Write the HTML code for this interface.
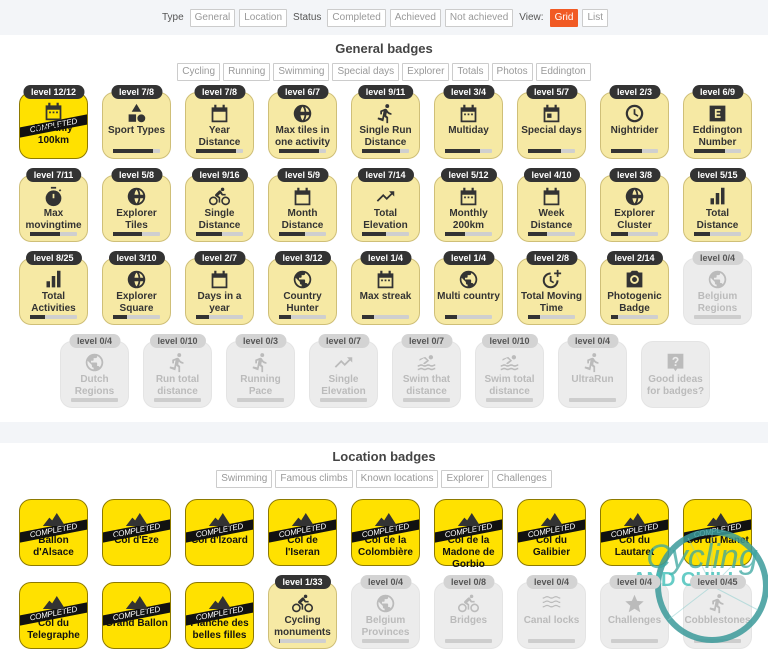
<!DOCTYPE html>
<html><head><meta charset="utf-8">
<style>
*{box-sizing:border-box}
body{margin:0;width:768px;height:655px;overflow:hidden;background:#fff;font-family:"Liberation Sans",sans-serif;position:relative}
.bar{position:absolute;left:0;width:768px;background:#f3f5f8}
.fb{position:absolute;top:0;left:0;width:768px;height:35px;display:flex;justify-content:center;align-items:center;gap:4px;font-size:10px;color:#555}
.fb span.l{margin:0 2px}
.btn{border:1px solid #ccc;background:#fff;color:#999;padding:2px 4px;font-size:10px;line-height:12px;border-radius:1px}
.btn.on{background:#f15a24;border-color:#f15a24;color:#fff}
h2{position:absolute;left:0;width:768px;text-align:center;margin:0;font-size:13px;font-weight:bold;color:#444}
.chips{position:absolute;left:0;width:768px;display:flex;justify-content:center;gap:3px}
.b{position:absolute;width:69px;height:67px;border-radius:12px;border:1px solid #cfbf78;background:#f6e9a4;text-align:center;font-weight:bold;font-size:10px;color:#333;line-height:12px}
.lv{position:absolute;top:-8px;left:50%;transform:translateX(-50%);background:#333;color:#fff;font-size:9px;padding:1px 8px;border-radius:8px;white-space:nowrap;line-height:12px;font-weight:bold;z-index:3}
.ic{display:block;margin:10px auto 1px;width:21px;height:21px;fill:#333;stroke:none;position:relative}
.pb{position:absolute;left:10px;right:10px;bottom:5px;height:4px;background:#cfcfcf;border-radius:1px}
.pb i{display:block;height:100%;background:#333}
.g{background:#ececec;border-color:#e4e4e4;color:#bbb}
.g .lv{background:#d3d3d3;color:#555}
.g .ic{fill:#bbb}
.g .pb{background:#cdcdcd}
.c{background:#ffe100;border-color:#8e7a00;color:#111}
.clip{position:absolute;left:0;top:0;right:0;bottom:0;overflow:hidden;border-radius:11px}
.band{position:absolute;left:-6px;right:-6px;top:28px;height:10px;background:#111;transform:rotate(-11deg);color:#fff;font-size:8px;font-style:italic;font-weight:normal;line-height:10px;letter-spacing:-.2px}
.c .t{position:relative}
.c .ic{margin-top:8px}
.lc .ic{margin-top:13px;width:24px;height:13px;margin-bottom:0}
.lc .band{top:26px}
.lc .t{margin-top:9px}
</style></head><body>
<svg width="0" height="0" style="position:absolute">
<defs>
<symbol id="cal" viewBox="0 0 24 24"><path d="M3 5h18v17H3zM5 10v10h14V10z" fill-rule="evenodd"/><rect x="6" y="2" width="2.5" height="5"/><rect x="15.5" y="2" width="2.5" height="5"/></symbol>
<symbol id="cald" viewBox="0 0 24 24"><path d="M3 5h18v17H3zM5 10v10h14V10z" fill-rule="evenodd"/><rect x="6" y="2" width="2.5" height="5"/><rect x="15.5" y="2" width="2.5" height="5"/><rect x="7" y="12" width="2" height="2"/><rect x="11" y="12" width="2" height="2"/><rect x="15" y="12" width="2" height="2"/></symbol>
<symbol id="cals" viewBox="0 0 24 24"><path d="M3 5h18v17H3zM5 10v10h14V10z" fill-rule="evenodd"/><rect x="6" y="2" width="2.5" height="5"/><rect x="15.5" y="2" width="2.5" height="5"/><rect x="7" y="12" width="5" height="5"/></symbol>
<symbol id="shp" viewBox="0 0 24 24"><path d="M12 1l5.5 9h-11z"/><rect x="3" y="13" width="8.5" height="8.5"/><circle cx="17.5" cy="17.5" r="4.5"/></symbol>
<symbol id="glb" viewBox="0 0 24 24"><path d="M12 2a10 10 0 1 0 0.01 0zM12 4.2c1.2 1.3 2 3.4 2.3 5.8H9.7C10 7.6 10.8 5.5 12 4.2zM4.3 10h3.4c.1-2.2.7-4 1.5-5.4A8 8 0 0 0 4.3 10zm0 4a8 8 0 0 0 4.9 5.4C8.4 18 7.8 16.2 7.7 14zm5.4 0h4.6c-.3 2.4-1.1 4.5-2.3 5.8-1.2-1.3-2-3.4-2.3-5.8zm6.6 0h3.4a8 8 0 0 1-4.9 5.4c.8-1.4 1.4-3.2 1.5-5.4zm3.4-4h-3.4c-.1-2.2-.7-4-1.5-5.4a8 8 0 0 1 4.9 5.4z"/></symbol>
<symbol id="run" viewBox="0 0 24 24"><circle cx="14" cy="3.5" r="2.2"/><path d="M9.5 21l1.2-5.5 2.3 2.1V23h2v-6.8l-2.2-2 .7-3.2c1.3 1.5 3.1 2.5 5.3 2.5v-2c-1.8 0-3.3-1-4.1-2.3l-1-1.6c-.4-.6-1-1-1.7-1-.3 0-.5.1-.8.1L6 8.8V13h2V10.1l1.8-.7-1.6 8.1-4.8-1-.4 2z"/></symbol>
<symbol id="clk" viewBox="0 0 24 24"><path d="M12 2a10 10 0 1 0 .01 0zm0 2.5a7.5 7.5 0 1 1-.01 0zM11 7h2v5l3.5 2.1-1 1.6L11 13z"/></symbol>
<symbol id="E" viewBox="0 0 24 24"><path d="M3 3h18v18H3zM9 7v10h6.5v-2H11v-2h4v-2h-4V9h4.5V7z" fill-rule="evenodd"/></symbol>
<symbol id="sw" viewBox="0 0 24 24"><rect x="9" y="1" width="6" height="2"/><path d="M12 5a9 9 0 1 0 .01 0zm-1 4h2v5h-2z"/><path d="M18 5l1.5-1.5 1.4 1.4L19.4 6.4z"/></symbol>
<symbol id="bike" viewBox="0 0 24 24"><circle cx="15.5" cy="3.8" r="2"/><path d="M5 12a5 5 0 1 0 .01 0zm0 1.8a3.2 3.2 0 1 1-.01 0zM19 12a5 5 0 1 0 .01 0zm0 1.8a3.2 3.2 0 1 1-.01 0zM14.8 10.8H19V9h-3.2l-1.9-3.2c-.3-.5-.9-.8-1.5-.8-.5 0-.9.2-1.2.5L7.4 9.3c-.3.3-.5.7-.5 1.2 0 .6.3 1.1.8 1.4L11 14v5h1.8v-6.2l-2.3-1.7 2.4-2.4z"/></symbol>
<symbol id="trd" viewBox="0 0 24 24"><path d="M16 6l2.3 2.3-4.9 4.9-4-4L2 16.6 3.4 18l6-6 4 4 6.3-6.3L22 12V6z"/></symbol>
<symbol id="bar" viewBox="0 0 24 24"><rect x="4" y="14" width="4" height="7"/><rect x="10" y="8" width="4" height="13"/><rect x="16" y="2" width="4" height="19"/></symbol>
<symbol id="erth" viewBox="0 0 24 24"><path d="M12 2a10 10 0 1 0 .01 0zM11 19.9A8 8 0 0 1 4.2 10L9 14.8v1a2 2 0 0 0 2 2zm6.9-2.5A2 2 0 0 0 16 16h-1v-3a1 1 0 0 0-1-1H8v-2h2a1 1 0 0 0 1-1V7h2a2 2 0 0 0 2-2v-.4a8 8 0 0 1 2.9 12.8z"/></symbol>
<symbol id="cam" viewBox="0 0 24 24"><path d="M9 2L7.2 4H3v17h18V4h-4.2L15 2zm3 5a5 5 0 1 1-.01 0zm0 2.2a2.8 2.8 0 1 0 .01 0z" fill-rule="evenodd"/></symbol>
<symbol id="clkp" viewBox="0 0 24 24"><path d="M11 4a9 9 0 1 0 9 9h-2.3A6.7 6.7 0 1 1 11 6.3zm-1 4h2v5l3 1.8-1 1.6-4-2.4z"/><path d="M18 1h2v3h3v2h-3v3h-2V6h-3V4h3z"/></symbol>
<symbol id="swim" viewBox="0 0 24 24"><circle cx="17" cy="6" r="2.5"/><path d="M4 10l5-3 3.5 2.5L8 13l2 1 5-4-4.5-4.5L4 8zM2 15c2 0 2-1 4-1s2 1 4 1 2-1 4-1 2 1 4 1 2-1 4-1v1.8c-2 0-2 1-4 1s-2-1-4-1-2 1-4 1-2-1-4-1-2 1-4 1zm0 4c2 0 2-1 4-1s2 1 4 1 2-1 4-1 2 1 4 1 2-1 4-1v1.8c-2 0-2 1-4 1s-2-1-4-1-2 1-4 1-2-1-4-1-2 1-4 1z"/></symbol>
<symbol id="q" viewBox="0 0 24 24"><path d="M3 2h18v17h-7l-2 3-2-3H3zm9 3.5c-2 0-3.5 1.3-3.5 3.3h2c0-.9.6-1.5 1.5-1.5s1.5.6 1.5 1.4c0 1.5-2.3 1.5-2.3 4h2c0-1.8 2.3-2 2.3-4.1 0-1.8-1.5-3.1-3.5-3.1zM11 14h2v2h-2z" fill-rule="evenodd"/></symbol>
<symbol id="wav" viewBox="0 0 24 24"><path d="M2 5c2.5 0 2.5-1.5 5-1.5S9.5 5 12 5s2.5-1.5 5-1.5S19.5 5 22 5v1.5c-2.5 0-2.5-1.5-5-1.5s-2.5 1.5-5 1.5S9.5 5 7 5 4.5 6.5 2 6.5zm0 5c2.5 0 2.5-1.5 5-1.5s2.5 1.5 5 1.5 2.5-1.5 5-1.5 2.5 1.5 5 1.5v1.5c-2.5 0-2.5-1.5-5-1.5s-2.5 1.5-5 1.5-2.5-1.5-5-1.5-2.5 1.5-5 1.5zm0 5c2.5 0 2.5-1.5 5-1.5s2.5 1.5 5 1.5 2.5-1.5 5-1.5 2.5 1.5 5 1.5v1.5c-2.5 0-2.5-1.5-5-1.5s-2.5 1.5-5 1.5-2.5-1.5-5-1.5-2.5 1.5-5 1.5z"/></symbol>
<symbol id="star" viewBox="0 0 24 24"><path d="M12 2l3 7 7.5.6-5.7 5 1.8 7.4L12 18l-6.6 4 1.8-7.4-5.7-5L9 9z"/></symbol>
<symbol id="mtn" viewBox="0 0 24 14"><path d="M0 14l7-9 3 3 5-8 9 14z"/></symbol>
</defs></svg>

<div class="bar" style="top:0;height:35px"></div>
<div class="fb"><span class="l">Type</span><span class="btn">General</span><span class="btn">Location</span><span class="l">Status</span><span class="btn">Completed</span><span class="btn">Achieved</span><span class="btn">Not achieved</span><span class="l">View:</span><span class="btn on">Grid</span><span class="btn">List</span></div>

<h2 style="top:41px">General badges</h2>
<div class="chips" style="top:63px"><span class="btn">Cycling</span><span class="btn">Running</span><span class="btn">Swimming</span><span class="btn">Special days</span><span class="btn">Explorer</span><span class="btn">Totals</span><span class="btn">Photos</span><span class="btn">Eddington</span></div>

<div class="b c" style="left:19px;top:92px"><span class="lv">level 12/12</span><div class="clip"><div class="band">COMPLETED</div></div><svg class="ic"><use href="#cald"/></svg><div class="t">Monthly<br>100km</div></div>
<div class="b" style="left:102px;top:92px"><span class="lv">level 7/8</span><svg class="ic"><use href="#shp"/></svg><div class="t">Sport Types</div><div class="pb"><i style="width:85%"></i></div></div>
<div class="b" style="left:185px;top:92px"><span class="lv">level 7/8</span><svg class="ic"><use href="#cal"/></svg><div class="t">Year<br>Distance</div><div class="pb"><i style="width:85%"></i></div></div>
<div class="b" style="left:268px;top:92px"><span class="lv">level 6/7</span><svg class="ic"><use href="#glb"/></svg><div class="t">Max tiles in<br>one activity</div><div class="pb"><i style="width:85%"></i></div></div>
<div class="b" style="left:351px;top:92px"><span class="lv">level 9/11</span><svg class="ic"><use href="#run"/></svg><div class="t">Single Run<br>Distance</div><div class="pb"><i style="width:80%"></i></div></div>
<div class="b" style="left:434px;top:92px"><span class="lv">level 3/4</span><svg class="ic"><use href="#cald"/></svg><div class="t">Multiday</div><div class="pb"><i style="width:75%"></i></div></div>
<div class="b" style="left:517px;top:92px"><span class="lv">level 5/7</span><svg class="ic"><use href="#cals"/></svg><div class="t">Special days</div><div class="pb"><i style="width:70%"></i></div></div>
<div class="b" style="left:600px;top:92px"><span class="lv">level 2/3</span><svg class="ic"><use href="#clk"/></svg><div class="t">Nightrider</div><div class="pb"><i style="width:67%"></i></div></div>
<div class="b" style="left:683px;top:92px"><span class="lv">level 6/9</span><svg class="ic"><use href="#E"/></svg><div class="t">Eddington<br>Number</div><div class="pb"><i style="width:67%"></i></div></div>

<div class="b" style="left:19px;top:175px"><span class="lv">level 7/11</span><svg class="ic"><use href="#sw"/></svg><div class="t">Max<br>movingtime</div><div class="pb"><i style="width:64%"></i></div></div>
<div class="b" style="left:102px;top:175px"><span class="lv">level 5/8</span><svg class="ic"><use href="#glb"/></svg><div class="t">Explorer<br>Tiles</div><div class="pb"><i style="width:62%"></i></div></div>
<div class="b" style="left:185px;top:175px"><span class="lv">level 9/16</span><svg class="ic"><use href="#bike"/></svg><div class="t">Single<br>Distance</div><div class="pb"><i style="width:56%"></i></div></div>
<div class="b" style="left:268px;top:175px"><span class="lv">level 5/9</span><svg class="ic"><use href="#cal"/></svg><div class="t">Month<br>Distance</div><div class="pb"><i style="width:55%"></i></div></div>
<div class="b" style="left:351px;top:175px"><span class="lv">level 7/14</span><svg class="ic"><use href="#trd"/></svg><div class="t">Total<br>Elevation</div><div class="pb"><i style="width:50%"></i></div></div>
<div class="b" style="left:434px;top:175px"><span class="lv">level 5/12</span><svg class="ic"><use href="#cald"/></svg><div class="t">Monthly<br>200km</div><div class="pb"><i style="width:42%"></i></div></div>
<div class="b" style="left:517px;top:175px"><span class="lv">level 4/10</span><svg class="ic"><use href="#cal"/></svg><div class="t">Week<br>Distance</div><div class="pb"><i style="width:40%"></i></div></div>
<div class="b" style="left:600px;top:175px"><span class="lv">level 3/8</span><svg class="ic"><use href="#glb"/></svg><div class="t">Explorer<br>Cluster</div><div class="pb"><i style="width:37%"></i></div></div>
<div class="b" style="left:683px;top:175px"><span class="lv">level 5/15</span><svg class="ic"><use href="#bar"/></svg><div class="t">Total<br>Distance</div><div class="pb"><i style="width:33%"></i></div></div>

<div class="b" style="left:19px;top:258px"><span class="lv">level 8/25</span><svg class="ic"><use href="#bar"/></svg><div class="t">Total<br>Activities</div><div class="pb"><i style="width:32%"></i></div></div>
<div class="b" style="left:102px;top:258px"><span class="lv">level 3/10</span><svg class="ic"><use href="#glb"/></svg><div class="t">Explorer<br>Square</div><div class="pb"><i style="width:30%"></i></div></div>
<div class="b" style="left:185px;top:258px"><span class="lv">level 2/7</span><svg class="ic"><use href="#cal"/></svg><div class="t">Days in a<br>year</div><div class="pb"><i style="width:28%"></i></div></div>
<div class="b" style="left:268px;top:258px"><span class="lv">level 3/12</span><svg class="ic"><use href="#erth"/></svg><div class="t">Country<br>Hunter</div><div class="pb"><i style="width:25%"></i></div></div>
<div class="b" style="left:351px;top:258px"><span class="lv">level 1/4</span><svg class="ic"><use href="#cald"/></svg><div class="t">Max streak</div><div class="pb"><i style="width:25%"></i></div></div>
<div class="b" style="left:434px;top:258px"><span class="lv">level 1/4</span><svg class="ic"><use href="#erth"/></svg><div class="t">Multi country</div><div class="pb"><i style="width:25%"></i></div></div>
<div class="b" style="left:517px;top:258px"><span class="lv">level 2/8</span><svg class="ic"><use href="#clkp"/></svg><div class="t">Total Moving<br>Time</div><div class="pb"><i style="width:25%"></i></div></div>
<div class="b" style="left:600px;top:258px"><span class="lv">level 2/14</span><svg class="ic"><use href="#cam"/></svg><div class="t">Photogenic<br>Badge</div><div class="pb"><i style="width:14%"></i></div></div>
<div class="b g" style="left:683px;top:258px"><span class="lv">level 0/4</span><svg class="ic"><use href="#erth"/></svg><div class="t">Belgium<br>Regions</div><div class="pb"></div></div>

<div class="b g" style="left:60px;top:341px"><span class="lv">level 0/4</span><svg class="ic"><use href="#erth"/></svg><div class="t">Dutch<br>Regions</div><div class="pb"></div></div>
<div class="b g" style="left:143px;top:341px"><span class="lv">level 0/10</span><svg class="ic"><use href="#run"/></svg><div class="t">Run total<br>distance</div><div class="pb"></div></div>
<div class="b g" style="left:226px;top:341px"><span class="lv">level 0/3</span><svg class="ic"><use href="#run"/></svg><div class="t">Running<br>Pace</div><div class="pb"></div></div>
<div class="b g" style="left:309px;top:341px"><span class="lv">level 0/7</span><svg class="ic"><use href="#trd"/></svg><div class="t">Single<br>Elevation</div><div class="pb"></div></div>
<div class="b g" style="left:392px;top:341px"><span class="lv">level 0/7</span><svg class="ic"><use href="#swim"/></svg><div class="t">Swim that<br>distance</div><div class="pb"></div></div>
<div class="b g" style="left:475px;top:341px"><span class="lv">level 0/10</span><svg class="ic"><use href="#swim"/></svg><div class="t">Swim total<br>distance</div><div class="pb"></div></div>
<div class="b g" style="left:558px;top:341px"><span class="lv">level 0/4</span><svg class="ic"><use href="#run"/></svg><div class="t">UltraRun</div><div class="pb"></div></div>
<div class="b g" style="left:641px;top:341px"><svg class="ic"><use href="#q"/></svg><div class="t">Good ideas<br>for badges?</div></div>

<div class="bar" style="top:422px;height:21px"></div>
<h2 style="top:449px">Location badges</h2>
<div class="chips" style="top:470px"><span class="btn">Swimming</span><span class="btn">Famous climbs</span><span class="btn">Known locations</span><span class="btn">Explorer</span><span class="btn">Challenges</span></div>

<div class="b c lc" style="left:19px;top:499px"><div class="clip"><div class="band">COMPLETED</div></div><svg class="ic"><use href="#mtn"/></svg><div class="t">Ballon<br>d'Alsace</div></div>
<div class="b c lc" style="left:102px;top:499px"><div class="clip"><div class="band">COMPLETED</div></div><svg class="ic"><use href="#mtn"/></svg><div class="t">Col d'Eze</div></div>
<div class="b c lc" style="left:185px;top:499px"><div class="clip"><div class="band">COMPLETED</div></div><svg class="ic"><use href="#mtn"/></svg><div class="t">Col d'Izoard</div></div>
<div class="b c lc" style="left:268px;top:499px"><div class="clip"><div class="band">COMPLETED</div></div><svg class="ic"><use href="#mtn"/></svg><div class="t">Col de<br>l'Iseran</div></div>
<div class="b c lc" style="left:351px;top:499px"><div class="clip"><div class="band">COMPLETED</div></div><svg class="ic"><use href="#mtn"/></svg><div class="t">Col de la<br>Colombière</div></div>
<div class="b c lc" style="left:434px;top:499px"><div class="clip"><div class="band">COMPLETED</div></div><svg class="ic"><use href="#mtn"/></svg><div class="t">Col de la<br>Madone de<br>Gorbio</div></div>
<div class="b c lc" style="left:517px;top:499px"><div class="clip"><div class="band">COMPLETED</div></div><svg class="ic"><use href="#mtn"/></svg><div class="t">Col du<br>Galibier</div></div>
<div class="b c lc" style="left:600px;top:499px"><div class="clip"><div class="band">COMPLETED</div></div><svg class="ic"><use href="#mtn"/></svg><div class="t">Col du<br>Lautaret</div></div>
<div class="b c lc" style="left:683px;top:499px"><div class="clip"><div class="band">COMPLETED</div></div><svg class="ic"><use href="#mtn"/></svg><div class="t">Col du Manet</div></div>

<div class="b c lc" style="left:19px;top:582px"><div class="clip"><div class="band">COMPLETED</div></div><svg class="ic"><use href="#mtn"/></svg><div class="t">Col du<br>Telegraphe</div></div>
<div class="b c lc" style="left:102px;top:582px"><div class="clip"><div class="band">COMPLETED</div></div><svg class="ic"><use href="#mtn"/></svg><div class="t">Grand Ballon</div></div>
<div class="b c lc" style="left:185px;top:582px"><div class="clip"><div class="band">COMPLETED</div></div><svg class="ic"><use href="#mtn"/></svg><div class="t">Planche des<br>belles filles</div></div>
<div class="b" style="left:268px;top:582px"><span class="lv">level 1/33</span><svg class="ic"><use href="#bike"/></svg><div class="t">Cycling<br>monuments</div><div class="pb"><i style="width:3%"></i></div></div>
<div class="b g" style="left:351px;top:582px"><span class="lv">level 0/4</span><svg class="ic"><use href="#erth"/></svg><div class="t">Belgium<br>Provinces</div><div class="pb"></div></div>
<div class="b g" style="left:434px;top:582px"><span class="lv">level 0/8</span><svg class="ic"><use href="#bike"/></svg><div class="t">Bridges</div><div class="pb"></div></div>
<div class="b g" style="left:517px;top:582px"><span class="lv">level 0/4</span><svg class="ic"><use href="#wav"/></svg><div class="t">Canal locks</div><div class="pb"></div></div>
<div class="b g" style="left:600px;top:582px"><span class="lv">level 0/4</span><svg class="ic"><use href="#star"/></svg><div class="t">Challenges</div><div class="pb"></div></div>
<div class="b g" style="left:683px;top:582px"><span class="lv">level 0/45</span><svg class="ic"><use href="#run"/></svg><div class="t">Cobblestones</div><div class="pb"></div></div>

<svg style="position:absolute;left:618px;top:510px" width="150" height="145" viewBox="0 0 150 145">
<circle cx="94" cy="76" r="54" fill="none" stroke="#3b9a9a" stroke-width="6" opacity=".85"/>
<g stroke="#8cc" stroke-width="1" opacity=".5"><line x1="94" y1="76" x2="94" y2="24"/><line x1="94" y1="76" x2="140" y2="100"/><line x1="94" y1="76" x2="50" y2="110"/><line x1="94" y1="76" x2="70" y2="28"/><line x1="94" y1="76" x2="130" y2="40"/></g>
<text x="84" y="58" text-anchor="middle" font-family="Liberation Sans,sans-serif" font-size="34" font-style="italic" fill="#3aa6a0" opacity=".75">Cycling</text>
<text x="68" y="76" text-anchor="middle" font-family="Liberation Sans,sans-serif" font-weight="bold" font-size="20" fill="#40c0b8" opacity=".8">AND CHILL</text>
</svg>
</body></html>
